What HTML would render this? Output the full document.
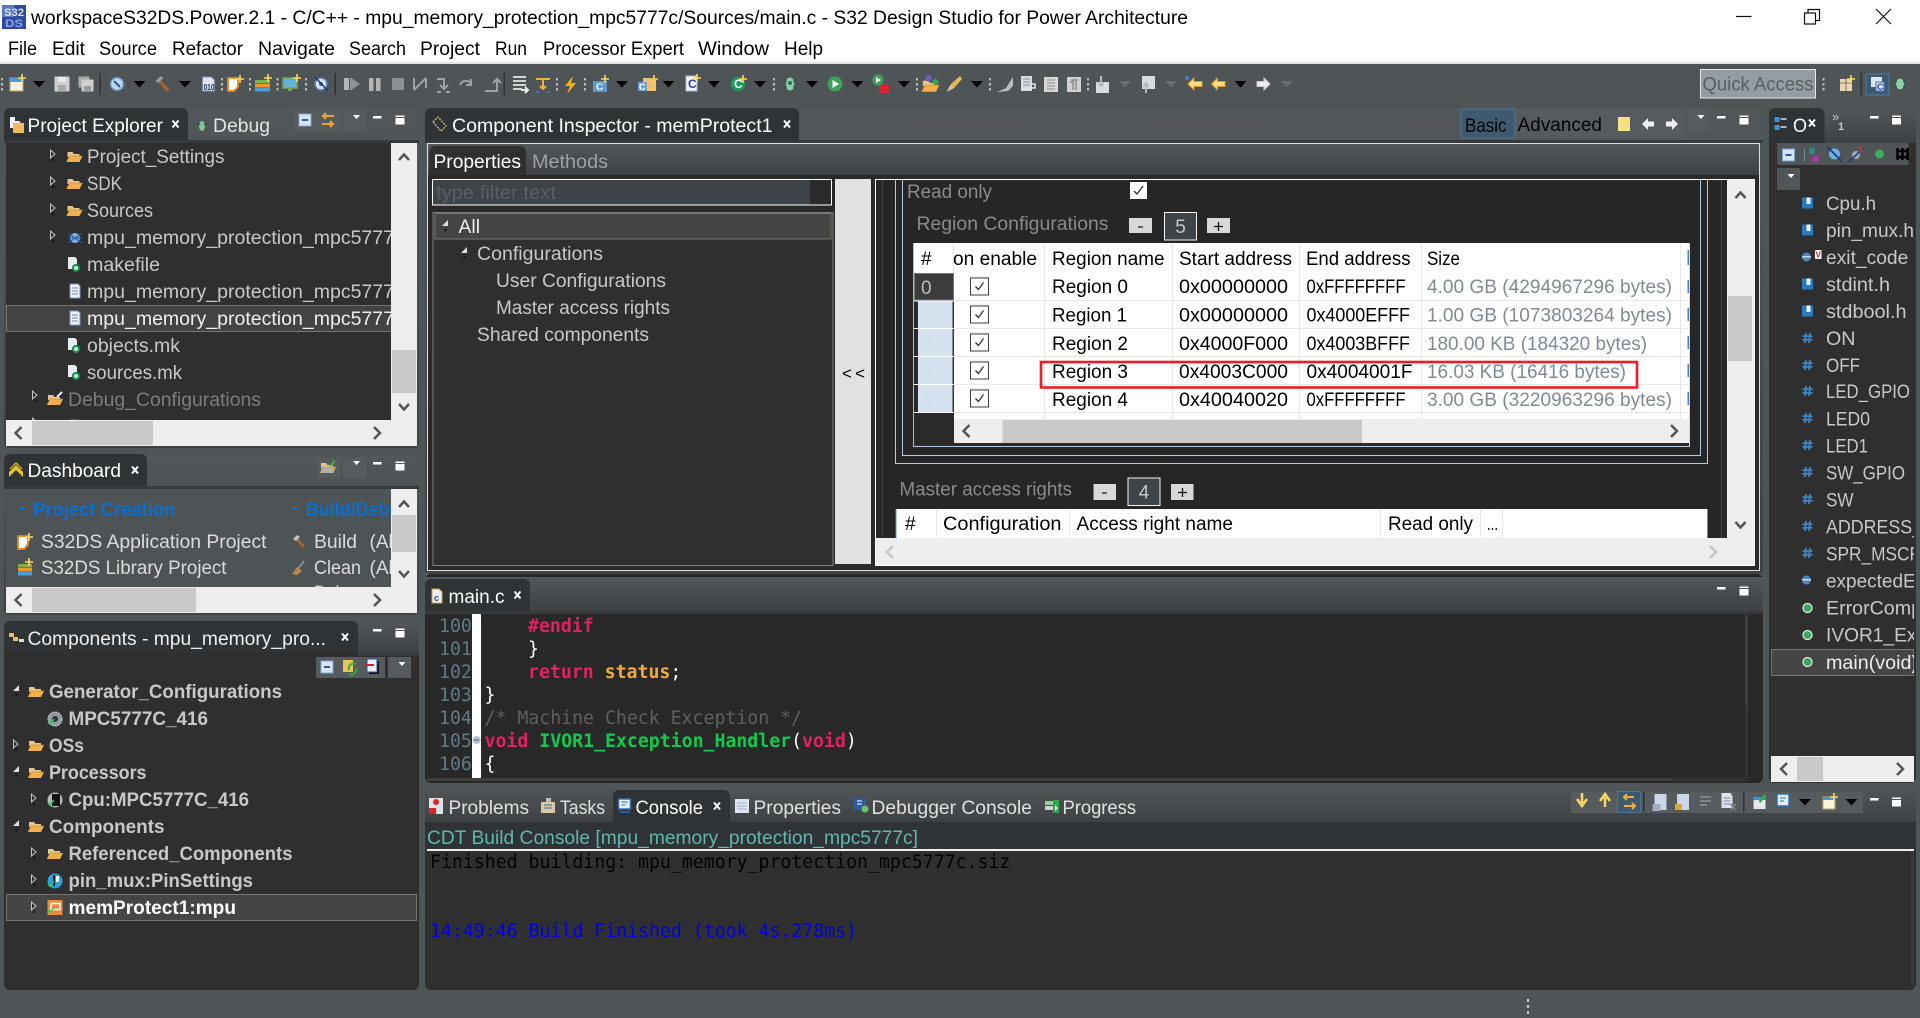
<!DOCTYPE html>
<html lang="en"><head><meta charset="utf-8"><title>S32 Design Studio</title>
<style>
html,body{margin:0;padding:0;background:#4f5457;width:1920px;height:1018px;overflow:hidden}
svg{display:block}
text{font-family:"Liberation Sans","Noto Sans CJK SC",sans-serif;font-size:19px;white-space:pre}
.k{fill:#000}.w{fill:#fff}.l{fill:#c8c8c8}.g{fill:#8a8a8a}.d{fill:#7c7c7c}.s{fill:#7f8b97}
.b{font-weight:bold}
.m{font-family:"DejaVu Sans Mono","Liberation Mono",monospace;font-size:18.2px}
.pk{fill:#e0235f;font-weight:bold}.gr{fill:#12c94c;font-weight:bold}.or{fill:#f2a93b;font-weight:bold}.cm{fill:#5f5f5f}.ln{fill:#5f7a85}
.ic{font-size:9px;font-weight:bold}
</style></head><body>
<svg xmlns="http://www.w3.org/2000/svg" width="1920" height="1018" viewBox="0 0 1920 1018">
<defs>
<linearGradient id="tb" x1="0" y1="0" x2="0" y2="1"><stop offset="0" stop-color="#52575a"/><stop offset="1" stop-color="#3e4143"/></linearGradient>
<clipPath id="c1"><rect x="6" y="143" width="385" height="277"/></clipPath>
<clipPath id="c2"><rect x="6" y="489" width="385" height="98"/></clipPath>
<clipPath id="c3"><rect x="1771" y="190" width="143" height="566"/></clipPath>
<clipPath id="c4"><rect x="427" y="614" width="1318" height="165"/></clipPath>
<path id="dd" d="M-6-3H6L0 3.5z" fill="#000"/>
<path id="ddg" d="M-6-3H6L0 3.5z" fill="#696e71"/>
<path id="wd" d="M-3.5-2H3.500L0 2z" fill="#fff"/>
<g id="gr"><rect x="-1" y="-7" width="2" height="2.500" fill="#bbb"/><rect x="-1" y="-2" width="2" height="2.500" fill="#bbb"/><rect x="-1" y="3" width="2" height="2.500" fill="#bbb"/></g>
<rect id="sp" x="-.5" y="-11" width="1.500" height="22" fill="#2f3234"/>
<g id="fo"><path d="M-7-5h5l1.500 2H5v3H-7z" fill="#e8c489"/><path d="M-8 5L-5-1H8L5 5z" fill="#f2b04d"/><path d="M-8 5L-5-1H8" fill="none" stroke="#b98635" stroke-width=".6"/></g>
<g id="doc"><path d="M-5-7H3L5-5V7H-5z" fill="#eef2fa" stroke="#7e95bd"/><path d="M-3-3H3M-3 0H3M-3 3H3" stroke="#6b87b8"/></g>
<g id="mk"><path d="M-5-7H2L4-5V5H-5z" fill="#e7ecf3"/><circle cx="3" cy="4" r="4" fill="#13924f"/><circle cx="3" cy="4" r="2" fill="#cfe8d6"/></g>
<g id="ex"><path d="M-2.500-5L2 -1L-2.500 3z" fill="#2f2f2f" stroke="#c4c4c4"/><path d="M-1 3L1 5L-1 6" stroke="#111" fill="none"/></g>
<g id="co"><path d="M3-6V0H-3z" fill="#e0e0e0"/><path d="M-1 3L2 3L0 6z" fill="#111"/></g>
<path id="cl" d="M-3-3.500L3 3.500M3-3.500L-3 3.500" stroke="#fff" stroke-width="2"/>
<rect id="mn" x="-4" y="-1" width="8.500" height="2.500" fill="#fff"/>
<g id="mx"><rect x="-4.500" y="-4.500" width="9" height="9" fill="#fff"/><rect x="-4.500" y="-3" width="9" height="1" fill="#555"/></g>
<path id="cU" d="M-5 3L0-2.500L5 3" fill="none" stroke="#555" stroke-width="2.500"/>
<path id="cD" d="M-5-3L0 2.500L5-3" fill="none" stroke="#555" stroke-width="2.500"/>
<path id="cL" d="M3-6L-3 0L3 6" fill="none" stroke="#555" stroke-width="2.500"/>
<path id="cR" d="M-3-6L3 0L-3 6" fill="none" stroke="#555" stroke-width="2.500"/>
<g id="cb"><rect x="-9.500" y="-9.500" width="19" height="19" fill="#f0f0f0"/><rect x="-9" y="-7.500" width="18" height="17" fill="#fff" stroke="#3f3f3f"/><path d="M-4 1L-1 4L4-3" fill="none" stroke="#333" stroke-width="1.300"/></g>
<g id="ha"><path d="M-1.500-5L-2.500 5M2.500-5L1.500 5M-5-1.800H5M-5 1.800H5" stroke="#3d86c6" stroke-width="1.800" fill="none"/></g>
<g id="in"><rect x="-5.500" y="-5.500" width="11" height="11" fill="#2a78bd"/><path d="M-1-5.500V1H3V-5.500" fill="#e8f0f8"/></g>
<g id="bd"><circle r="4.500" fill="#4b86c2"/><rect x="-4.500" y="-1" width="9" height="1.500" fill="#c5d9ee"/></g>
<g id="gd"><circle r="4.500" fill="#3da35e" stroke="#dcefe2" stroke-width="1.300"/></g>
<g id="plus"><path d="M0-4V4M-4 0H4" stroke="#ffd75e" stroke-width="1.600"/></g>
</defs>

<rect width="1920" height="1018" fill="#4f5457"/>
<!-- title / menu -->
<rect width="1920" height="62" fill="#fff"/><rect y="62" width="1920" height="2" fill="#e4e4e4"/>
<rect x="2" y="5" width="24" height="24" fill="#2c4aa0"/>
<path d="M2 5h12v12H2z" fill="#5878c8"/><text x="4" y="16" textLength="20" lengthAdjust="spacingAndGlyphs" style="font-size:11px;font-weight:bold;fill:#dfe6f7">S32</text><text x="5" y="27" textLength="18" lengthAdjust="spacingAndGlyphs" style="font-size:11px;font-weight:bold;fill:#8ea4dd">DS</text>
<text class="k" x="31" y="24" textLength="1157" lengthAdjust="spacingAndGlyphs">workspaceS32DS.Power.2.1 - C/C++ - mpu_memory_protection_mpc5777c/Sources/main.c - S32 Design Studio for Power Architecture</text>
<text class="k" x="8" y="55" textLength="29" lengthAdjust="spacingAndGlyphs">File</text>
<text class="k" x="52" y="55" textLength="33" lengthAdjust="spacingAndGlyphs">Edit</text>
<text class="k" x="99" y="55" textLength="58" lengthAdjust="spacingAndGlyphs">Source</text>
<text class="k" x="172" y="55" textLength="71" lengthAdjust="spacingAndGlyphs">Refactor</text>
<text class="k" x="258" y="55" textLength="77" lengthAdjust="spacingAndGlyphs">Navigate</text>
<text class="k" x="349" y="55" textLength="57" lengthAdjust="spacingAndGlyphs">Search</text>
<text class="k" x="420" y="55" textLength="60" lengthAdjust="spacingAndGlyphs">Project</text>
<text class="k" x="495" y="55" textLength="32" lengthAdjust="spacingAndGlyphs">Run</text>
<text class="k" x="543" y="55" textLength="141" lengthAdjust="spacingAndGlyphs">Processor Expert</text>
<text class="k" x="698" y="55" textLength="71" lengthAdjust="spacingAndGlyphs">Window</text>
<text class="k" x="784" y="55" textLength="39" lengthAdjust="spacingAndGlyphs">Help</text>
<path d="M1736 16.500H1751.500" stroke="#111" stroke-width="1.200"/>
<rect x="1804.500" y="13" width="11" height="11" fill="none" stroke="#111" stroke-width="1.200"/><path d="M1808 13V9.500H1819.500V20.500H1815.500" fill="none" stroke="#111" stroke-width="1.200"/>
<path d="M1876 9L1891 24M1891 9L1876 24" stroke="#111" stroke-width="1.200"/>

<!-- main toolbar icons -->
<use href="#gr" x="2" y="85"/>
<g transform="translate(17,84)"><rect x="-7" y="-6" width="13" height="13" fill="#fbf3d8" stroke="#b9a470"/><rect x="-7" y="-6" width="13" height="4" fill="#4a9ad8"/><use href="#plus" x="5" y="-6"/></g>
<use href="#dd" x="39" y="84"/>
<g transform="translate(62,84)"><rect x="-7.500" y="-7.500" width="15" height="15" rx="1" fill="#cfcfcf"/><rect x="-4" y="-7" width="8" height="5" fill="#e8e8e8"/><rect x="-4" y="1" width="8" height="6" fill="#a9a9a9"/></g>
<g transform="translate(86,84)"><rect x="-7.500" y="-7.500" width="11" height="11" fill="#a8a8a8"/><rect x="-4.500" y="-4.500" width="12" height="12" rx="1" fill="#cfcfcf"/><rect x="-2" y="2" width="7" height="5" fill="#9a9a9a"/></g>
<use href="#sp" x="100" y="84"/>
<g transform="translate(117,84)"><circle r="6.500" fill="#bed7ee" stroke="#5e8cb8" stroke-width="2" stroke-dasharray="2 1.500"/><path d="M-3-3L3 3" stroke="#2b5a8a" stroke-width="2"/></g>
<use href="#dd" x="139.500" y="84"/>
<g transform="translate(162.500,84)"><path d="M-5-5L6 7" stroke="#a0622f" stroke-width="3.500"/><path d="M-7-3L-2-8L1-6L-4-1z" fill="#9a9a9a"/></g>
<use href="#dd" x="185" y="84"/>
<g transform="translate(208.500,84)"><path d="M-6-7H3L6-4V7H-6z" fill="#dde6f2" stroke="#7c90ad"/><text class="ic" x="-5" y="6" textLength="11" lengthAdjust="spacingAndGlyphs" style="fill:#20355f;font-size:8px">010</text></g>
<use href="#gr" x="222" y="85"/>
<g transform="translate(235,84)"><path d="M-7-6H3V3L-1 7H-7z" fill="#fff" stroke="#e58a1f" stroke-width="1.800"/><use href="#plus" x="5" y="-5"/></g>
<use href="#gr" x="250" y="85"/>
<g transform="translate(263,84)"><rect x="-8" y="-4" width="15" height="3.500" fill="#7fb04a"/><rect x="-8" y="0" width="15" height="3.500" fill="#f0962a"/><rect x="-8" y="4" width="15" height="3.500" fill="#4a9fd8"/><use href="#plus" x="5" y="-6"/></g>
<use href="#gr" x="277.500" y="85"/>
<g transform="translate(291,84)"><rect x="-8" y="-6" width="14" height="10" fill="#62b4e0" stroke="#7aa64a" stroke-width="1.500"/><rect x="-3" y="4" width="4" height="3" fill="#7aa64a"/><use href="#plus" x="6" y="-6"/></g>
<use href="#gr" x="306" y="85"/>
<g transform="translate(321,84)"><circle r="6" fill="#d4e4f2" stroke="#5a7fa8" stroke-width="1.500"/><circle r="2" fill="#3b6592"/><path d="M-6-7L7 7" stroke="#123b7a" stroke-width="1.500"/></g>
<use href="#sp" x="335" y="84"/>
<g fill="#b4b4b4"><rect x="344" y="78" width="5" height="12"/><path d="M350 77L360 84L350 91z" fill="#8f9396"/><rect x="369" y="78" width="4.500" height="13"/><rect x="376" y="78" width="4.500" height="13"/><rect x="392" y="78" width="12" height="12" rx="1" fill="#8d9194"/></g>
<g stroke="#a0a0a0" fill="none" stroke-width="2"><path d="M414 90L426 78"/><path d="M414 78V90M426 78V88"/><path d="M437 79H444V88M440 85L444 89L448 85M437 92H441M446 92H450"/><path d="M460 85A6 6 0 0 1 471 84M471 79V85H466"/><path d="M485 91H497V80M493 83L497 79L501 83"/></g>
<use href="#sp" x="504" y="84"/>
<g transform="translate(520,84)" stroke="#d4d4d4" stroke-width="2" fill="none"><path d="M-7-7H6M-7-3H6M-7 1H6M-7 5H2"/><path d="M1 6H7M5 3L8 6L5 9" stroke="#eee"/></g>
<g transform="translate(543,84)" stroke="#f2ae3e" stroke-width="2" fill="none"><path d="M-7-5H7M0-5V5M-3 2L0 5L3 2"/><path d="M-7 8H-3M3 8H7" stroke="#3a6fa8"/></g>
<use href="#gr" x="557" y="85"/>
<path d="M573 76L565 86H570L567 94L576 83H571z" fill="#f5b400"/>
<use href="#gr" x="585" y="85"/>
<g transform="translate(600,84)"><path d="M-7-3H7V8H-7z" fill="#5a9ad2"/><text class="ic" x="-4" y="6" style="fill:#fff;font-size:10px">C</text><use href="#plus" x="5" y="-5"/></g>
<use href="#dd" x="622" y="84"/>
<g transform="translate(646,84)"><path d="M-3-6H4L6-4H10V7H-3z" fill="#f0c36b"/><rect x="-8" y="-2" width="9" height="9" fill="#6f9fd6"/><text class="ic" x="-7" y="6" style="fill:#fff">C</text><use href="#plus" x="8" y="-5"/></g>
<use href="#dd" x="668.500" y="84"/>
<g transform="translate(692,84)"><path d="M-6-8H5V7H-6z" fill="#f2f5fb" stroke="#b0b8c8"/><text class="ic" x="-4" y="4" style="fill:#1f3fb5;font-size:12px">C</text><use href="#plus" x="5" y="-6"/></g>
<use href="#dd" x="714" y="84"/>
<g transform="translate(738,84)"><circle r="7" fill="#1d9c5e"/><text class="ic" x="-4" y="4" style="fill:#fff;font-size:12px">C</text><use href="#plus" x="5" y="-5"/></g>
<use href="#dd" x="760" y="84"/>
<use href="#gr" x="774" y="85"/>
<g transform="translate(790,84)"><ellipse rx="4.500" ry="6.500" fill="#8fcfa5"/><path d="M-7-5L-3-2M7-5L3-2M-7 5L-3 2M7 5L3 2M-8 0H-4M8 0H4" stroke="#2e4f48"/><circle cy="-1" r="2" fill="#2d6e5a"/></g>
<use href="#dd" x="812" y="84"/>
<g transform="translate(835,84)"><circle r="7.500" fill="#3aa457"/><path d="M-2.500-4L4 0L-2.500 4z" fill="#fff"/></g>
<use href="#dd" x="857.500" y="84"/>
<g transform="translate(881,84)"><circle cx="-3" cy="-4" r="5.500" fill="#3aa457"/><path d="M-5-7L0-4L-5-1z" fill="#fff"/><rect x="-2" y="2" width="11" height="7" fill="#d8262c"/><rect x="1" y="0" width="5" height="3" fill="none" stroke="#d8262c"/></g>
<use href="#dd" x="904" y="84"/>
<use href="#gr" x="917" y="85"/>
<g transform="translate(930.500,84)"><use href="#fo" y="2" transform="scale(1.100)"/><circle cx="-2" cy="-6" r="3.500" fill="#6c5bb8"/><circle cx="5" cy="-2" r="3" fill="#3aa457"/></g>
<g transform="translate(954,84)"><path d="M-7 7L-3 0L6-8L8-5L0 4z" fill="#e9b64c"/><path d="M-7 8L-4 1L0 4z" fill="#cfc4a5"/></g>
<use href="#dd" x="977" y="84"/>
<use href="#gr" x="990" y="85"/>
<path d="M997 92L1006 88L1013 77V86L1008 91L997 92z" fill="#bdbdbd"/>
<g transform="translate(1028,84)"><path d="M-7-8H4V7H-7z" fill="#d8dde4"/><path d="M-5-5H2M-5-2H2M-5 1H2" stroke="#808a95"/><path d="M3 0H7V4H0" fill="none" stroke="#e7e7e7" stroke-width="1.500"/></g>
<g transform="translate(1051,84)"><rect x="-7" y="-7" width="14" height="15" fill="#d8d8d8"/><path d="M-4-4H4M-4-1H4M-4 2H4M-4 5H4" stroke="#8c8c8c"/></g>
<g transform="translate(1074,84)"><rect x="-7" y="-7" width="14" height="15" fill="#d0d0d0"/><path d="M-3-4H4M-1-4V6M2-4V6M-4-2H0" stroke="#8c8c8c" stroke-width="1.500" fill="none"/></g>
<use href="#gr" x="1088" y="85"/>
<g transform="translate(1102,84)"><path d="M-6-2H7V9H-6z" fill="#d8dbe0"/><path d="M-1-8V2M-4-1L-1 2L2-1" stroke="#bbb" stroke-width="2" fill="none"/></g>
<use href="#ddg" x="1125" y="84"/>
<g transform="translate(1148,84)"><path d="M-6-8H7V5H-6z" fill="#d8dbe0"/><path d="M-2 9V0M-5 3L-2-1L1 3" stroke="#bbb" stroke-width="2" fill="none"/></g>
<use href="#ddg" x="1171" y="84"/>
<g transform="translate(1194,84)"><path d="M-6 0L0-6V-2.500H8V2.500H0V6z" fill="#ffe08a" stroke="#d89b2b"/><circle cx="-7" cy="-6" r="2" fill="#3f7fd0"/></g>
<path d="M1211.500 84L1217.500 78V81.500H1225V86.500H1217.500V90z" fill="#ffdc80" stroke="#d89b2b"/>
<use href="#dd" x="1240.500" y="84"/>
<path d="M1270 84L1264 78V81.500H1257V86.500H1264V90z" fill="#eee" stroke="#c8c8c8"/>
<use href="#ddg" x="1286.500" y="84"/>
<rect x="1700.500" y="69.500" width="115" height="28.500" fill="#969ca3" stroke="#e6e6e6"/>
<text x="1702.500" y="90.500" textLength="111" lengthAdjust="spacingAndGlyphs" style="fill:#5a5f64">Quick Access</text>
<use href="#gr" x="1823.500" y="85"/>
<g transform="translate(1846,84)"><rect x="-6" y="-5" width="12" height="12" fill="#e9d8a9"/><path d="M-6-1H6M0-5V7" stroke="#777"/><use href="#plus" x="5" y="-5"/></g>
<use href="#sp" x="1861" y="84"/>
<rect x="1866" y="74" width="23" height="21" fill="#3d5a70" stroke="#4d7aa0"/><g transform="translate(1877,84)"><rect x="-6" y="-7" width="11" height="10" fill="#dfe6ef"/><rect x="-1" y="-2" width="8" height="9" fill="#dfe6ef" stroke="#3e6ea5"/><text class="ic" x="0" y="6" style="fill:#1f3fb5">C</text></g>
<g transform="translate(1900,84)"><ellipse rx="4" ry="5.500" fill="#8fcfa5"/><path d="M-6-4L-3-2M6-4L3-2M-6 4L-3 2M6 4L3 2" stroke="#2e4f48"/></g>

<!-- Project Explorer -->
<rect x="4" y="108" width="415" height="340" rx="6" fill="url(#tb)"/>
<path d="M4 140V114A6 6 0 0 1 10 108H182A6 6 0 0 1 188 114V140z" fill="#2f3336"/>
<rect x="4" y="140" width="415" height="3" fill="#363a3c"/>
<rect x="6" y="143" width="385" height="277" fill="#2f2f2f"/>
<g transform="translate(16,125)"><path d="M-6-8H-1V-4H3L6-1V3H-6z" fill="#f4f4f4"/><rect x="-3" y="-2" width="11" height="10" fill="#f0ba5c"/></g>
<text class="w" x="27.500" y="132" textLength="135.500" lengthAdjust="spacingAndGlyphs">Project Explorer</text><use href="#cl" x="175.500" y="124"/>
<g transform="translate(202,126)"><ellipse rx="3" ry="5" fill="#7fc79a"/><path d="M-5-3L-2-1M5-3L2-1" stroke="#203d36"/></g>
<text class="w" x="213" y="132" textLength="57" lengthAdjust="spacingAndGlyphs" style="fill:#e4e4e4">Debug</text>
<rect x="294" y="111" width="46" height="20" fill="#565b5e"/><rect x="343" y="111" width="23" height="20" fill="#565b5e"/>
<g transform="translate(305,120)"><rect x="-6" y="-6" width="12" height="12" fill="#d9e4f1" stroke="#7ea6d2"/><rect x="-3" y="-1" width="6" height="2" fill="#2b5d9d"/></g>
<g transform="translate(328,120)" stroke="#e8a52f" stroke-width="2" fill="none"><path d="M6-4H-5M-2-7L-5-4L-2-1M-6 4H5M2 1L5 4L2 7"/></g>
<use href="#wd" x="356.500" y="117"/><use href="#mn" x="377" y="117"/><use href="#mx" x="400" y="120"/>
<g clip-path="url(#c1)">
<use href="#ex" x="53" y="155"/><use href="#fo" x="74.500" y="157"/><text class="l" x="87" y="163" textLength="137.500" lengthAdjust="spacingAndGlyphs">Project_Settings</text>
<use href="#ex" x="53" y="182"/><use href="#fo" x="74.500" y="184"/><text class="l" x="87" y="190" textLength="35" lengthAdjust="spacingAndGlyphs">SDK</text>
<use href="#ex" x="53" y="209"/><use href="#fo" x="74.500" y="211"/><text class="l" x="87" y="217" textLength="66" lengthAdjust="spacingAndGlyphs">Sources</text>
<use href="#ex" x="53" y="236"/><g transform="translate(75,238)"><circle r="5" fill="#7cb2e8"/><path d="M-7-5L7 5M7-5L-7 5M-7 0H7" stroke="#2c5c9c"/></g><text class="l" x="87" y="244" textLength="307" lengthAdjust="spacingAndGlyphs">mpu_memory_protection_mpc5777</text>
<use href="#mk" x="73" y="264"/><text class="l" x="87" y="271" textLength="73" lengthAdjust="spacingAndGlyphs">makefile</text>
<use href="#doc" x="75" y="291"/><text class="l" x="87" y="298" textLength="307" lengthAdjust="spacingAndGlyphs">mpu_memory_protection_mpc5777</text>
<rect x="6.500" y="305.500" width="385" height="26" fill="#434343" stroke="#76766a"/>
<use href="#doc" x="75" y="318"/><text class="w" x="87" y="325" textLength="307" lengthAdjust="spacingAndGlyphs" style="fill:#eee">mpu_memory_protection_mpc5777</text>
<use href="#mk" x="73" y="345"/><text class="l" x="87" y="352" textLength="93" lengthAdjust="spacingAndGlyphs">objects.mk</text>
<use href="#mk" x="73" y="372"/><text class="l" x="87" y="379" textLength="95" lengthAdjust="spacingAndGlyphs">sources.mk</text>
<use href="#ex" x="35" y="396"/><g transform="translate(55,400)"><use href="#fo"/><path d="M2-3L7-8" stroke="#f5f5f5" stroke-width="2"/></g><text class="d" x="68" y="406" textLength="193" lengthAdjust="spacingAndGlyphs">Debug_Configurations</text>
<use href="#ex" x="35" y="423"/><use href="#fo" x="55" y="427"/><text class="d" x="68" y="433" textLength="120" lengthAdjust="spacingAndGlyphs">Documents</text>
</g>
<rect x="391" y="143" width="26" height="303" fill="#eee"/><rect x="392" y="350" width="24" height="43" fill="#c9c9c9"/>
<use href="#cU" x="404" y="157"/><use href="#cD" x="404" y="407"/>
<rect x="6" y="420" width="411" height="26" fill="#eee"/><rect x="32" y="421" width="121" height="24" fill="#c9c9c9"/>
<use href="#cL" x="18.500" y="433"/><use href="#cR" x="377" y="433"/>

<!-- Dashboard -->
<rect x="4" y="454" width="415" height="161" rx="6" fill="url(#tb)"/>
<path d="M4 486V460A6 6 0 0 1 10 454H141A6 6 0 0 1 147 460V486z" fill="#2f3336"/>
<rect x="4" y="486" width="415" height="3" fill="#363a3c"/>
<path d="M9 472L16 465L23 472V477L16 470L9 477z" fill="#e6c229"/><path d="M10 469L16 463L22 469" fill="none" stroke="#c9a922" stroke-width="1.500"/>
<text class="w" x="27.500" y="477" textLength="93.500" lengthAdjust="spacingAndGlyphs">Dashboard</text><use href="#cl" x="135" y="470"/>
<rect x="317" y="458" width="23" height="20" fill="#565b5e"/><rect x="343" y="458" width="23" height="20" fill="#565b5e"/>
<g transform="translate(328,468)"><use href="#fo"/><rect x="-7" y="-1" width="13" height="6" fill="#7fb2e8" opacity=".55"/><path d="M2-2L7-7" stroke="#3fb24c" stroke-width="2"/></g>
<use href="#wd" x="356.500" y="463"/><use href="#mn" x="377" y="463"/><use href="#mx" x="400" y="466"/>
<rect x="6" y="489" width="385" height="98" fill="#4e5356"/>
<g clip-path="url(#c2)">
<path d="M18 507H26L22 511z" fill="#0a6fd0"/><path d="M291 507H299L295 511z" fill="#0a6fd0"/>
<text class="b" x="33" y="516" textLength="142.500" lengthAdjust="spacingAndGlyphs" style="fill:#0a6fd0">Project Creation</text>
<text class="b" x="306" y="516" textLength="105" lengthAdjust="spacingAndGlyphs" style="fill:#0a6fd0">Build/Debug</text>
<g transform="translate(25,542)"><path d="M-7-6H3V3L-1 7H-7z" fill="#fff" stroke="#e58a1f" stroke-width="1.800"/><use href="#plus" x="4" y="-5"/></g>
<text class="l" x="41" y="548" textLength="225.500" lengthAdjust="spacingAndGlyphs" style="fill:#dcdcdc">S32DS Application Project</text>
<g transform="translate(25,568)"><rect x="-7" y="-4" width="14" height="3.500" fill="#7fb04a"/><rect x="-7" y="0" width="14" height="3.500" fill="#f0962a"/><rect x="-7" y="4" width="14" height="3.500" fill="#4a9fd8"/><use href="#plus" x="4" y="-6"/></g>
<text class="l" x="41" y="574" textLength="185.500" lengthAdjust="spacingAndGlyphs" style="fill:#dcdcdc">S32DS Library Project</text>
<g transform="translate(299,541)"><path d="M-3-3L5 6" stroke="#a0622f" stroke-width="3"/><path d="M-6-2L-2-6L1-4L-3 0z" fill="#c0c0c0"/></g>
<text class="l" x="314" y="548" textLength="43" lengthAdjust="spacingAndGlyphs" style="fill:#dcdcdc">Build</text><text class="l" x="369.500" y="548" style="fill:#dcdcdc">(All)</text>
<g transform="translate(299,568)"><path d="M5-7L-1 1" stroke="#8a8a8a" stroke-width="2"/><path d="M-7 6L-2-1L3 3L-2 7z" fill="#b8854b"/></g>
<text class="l" x="314" y="574" textLength="47" lengthAdjust="spacingAndGlyphs" style="fill:#dcdcdc">Clean</text><text class="l" x="369.500" y="574" style="fill:#dcdcdc">(All)</text>
<text class="l" x="314" y="599" textLength="50" lengthAdjust="spacingAndGlyphs">Debug</text>
</g>
<rect x="391" y="489" width="26" height="98" fill="#eee"/><rect x="392" y="515" width="24" height="37" fill="#c9c9c9"/>
<use href="#cU" x="404" y="504"/><use href="#cD" x="404" y="574"/>
<rect x="6" y="587" width="411" height="26" fill="#eee"/><rect x="32" y="588" width="164" height="24" fill="#c9c9c9"/>
<use href="#cL" x="18.500" y="600"/><use href="#cR" x="377" y="600"/>

<!-- Components -->
<rect x="4" y="621" width="415" height="369" rx="6" fill="#2f2f2f"/>
<path d="M4 653V627A6 6 0 0 1 10 621H419V653z" fill="url(#tb)"/>
<path d="M4 653V627A6 6 0 0 1 10 621H352A6 6 0 0 1 358 627V653z" fill="#2f3336"/>
<rect x="358" y="653" width="61" height="3" fill="#363a3c"/>
<g transform="translate(16,638)"><rect x="-7" y="-5" width="5" height="4" fill="#f0ba5c"/><rect x="-3" y="-1" width="5" height="4" fill="#f0ba5c"/><rect x="3" y="1" width="5" height="3" fill="#ddd"/></g>
<text class="w" x="27.500" y="645" textLength="298.500" lengthAdjust="spacingAndGlyphs" style="fill:#eee">Components - mpu_memory_pro...</text><use href="#cl" x="345" y="637"/>
<use href="#mn" x="377" y="630"/><use href="#mx" x="400" y="633"/>
<rect x="316" y="657" width="69" height="21" fill="#565b5e"/><rect x="388" y="657" width="23" height="21" fill="#565b5e"/>
<g transform="translate(327,667)"><rect x="-6" y="-6" width="12" height="12" fill="#d9e4f1" stroke="#7ea6d2"/><rect x="-3" y="-1" width="6" height="2" fill="#2b5d9d"/></g>
<g transform="translate(350,667)"><rect x="-7" y="-7" width="10" height="12" fill="#e9c55a"/><path d="M-1 3A5 5 0 0 1 6-3M6 1A5 5 0 0 1-1 7" stroke="#2fae42" stroke-width="2" fill="none"/></g>
<g transform="translate(373,667)"><rect x="-4" y="-6" width="10" height="13" fill="#111"/><rect x="-6" y="-8" width="10" height="13" fill="#e8eefa" stroke="#3950a8"/><path d="M-7-2H1" stroke="#c81e2f" stroke-width="2"/></g>
<use href="#wd" x="402" y="664"/>
<use href="#co" x="16" y="691"/><use href="#fo" x="36" y="692"/><text class="l b" x="49" y="698" textLength="233" lengthAdjust="spacingAndGlyphs">Generator_Configurations</text>
<g transform="translate(55,719)"><circle r="7" fill="#8f9aa3" stroke="#cfd4d8" stroke-width="1" stroke-dasharray="2 1"/><circle r="3" fill="#333"/><path d="M-7 3L-5 5L-1 0" stroke="#33c85a" stroke-width="1.600" fill="none"/></g><text class="l b" x="68.500" y="725" textLength="139.500" lengthAdjust="spacingAndGlyphs">MPC5777C_416</text>
<use href="#ex" x="16" y="745"/><use href="#fo" x="36" y="746"/><text class="l b" x="49" y="752" textLength="35" lengthAdjust="spacingAndGlyphs">OSs</text>
<use href="#co" x="16" y="772"/><use href="#fo" x="36" y="773"/><text class="l b" x="49" y="779" textLength="97.500" lengthAdjust="spacingAndGlyphs">Processors</text>
<use href="#ex" x="34" y="799"/><g transform="translate(55,800)"><circle r="7.500" fill="#bbb"/><rect x="-3" y="-6" width="8" height="12" fill="#111"/><path d="M-7 3L-5 5L-1 0" stroke="#33c85a" stroke-width="1.600" fill="none"/></g><text class="l b" x="68.500" y="806" textLength="180.500" lengthAdjust="spacingAndGlyphs">Cpu:MPC5777C_416</text>
<use href="#co" x="16" y="826"/><use href="#fo" x="36" y="827"/><text class="l b" x="49" y="833" textLength="115.500" lengthAdjust="spacingAndGlyphs">Components</text>
<use href="#ex" x="34" y="853"/><use href="#fo" x="55" y="854"/><text class="l b" x="68.500" y="860" textLength="224" lengthAdjust="spacingAndGlyphs">Referenced_Components</text>
<use href="#ex" x="34" y="880"/><g transform="translate(55,881)"><circle r="7.500" fill="#27a3e0"/><rect x="-2" y="-6" width="2" height="11" fill="#111"/><rect x="1" y="-5" width="3" height="6" fill="#fff"/><path d="M-7 3L-5 5L-1 0" stroke="#33c85a" stroke-width="1.600" fill="none"/></g><text class="l b" x="68.500" y="887" textLength="184.500" lengthAdjust="spacingAndGlyphs">pin_mux:PinSettings</text>
<rect x="6.500" y="894.500" width="410" height="26" fill="#454545" stroke="#77766a"/>
<use href="#ex" x="34" y="907"/><g transform="translate(55,907.500)"><rect x="-7.500" y="-7.500" width="15" height="15" fill="#ee8a3a"/><rect x="-4" y="-4" width="9" height="6" fill="none" stroke="#fff" stroke-width="1.500"/><path d="M-7 3L-5 5L-1 0" stroke="#33c85a" stroke-width="1.600" fill="none"/></g><text class="w b" x="68.500" y="914" textLength="167.500" lengthAdjust="spacingAndGlyphs">memProtect1:mpu</text>

<!-- Component Inspector -->
<rect x="425" y="108" width="1338" height="466" rx="6" fill="url(#tb)"/>
<path d="M425 140V114A6 6 0 0 1 431 108H793A6 6 0 0 1 799 114V140z" fill="#2f3336"/>
<rect x="425" y="140" width="1338" height="3" fill="#363a3c"/>
<g transform="translate(439,124)"><path d="M-6-2L-1-7L7 2L2 7z" fill="none" stroke="#cfc23c" stroke-width="1.300" stroke-dasharray="2 1"/></g>
<text class="w" x="452" y="132" textLength="320.500" lengthAdjust="spacingAndGlyphs">Component Inspector - memProtect1</text><use href="#cl" x="787" y="124"/>
<rect x="1461" y="109" width="223" height="29" fill="#565b5e"/>
<rect x="1461" y="109" width="54" height="29" fill="#3f5a6e" stroke="#4a7595"/>
<text class="k" x="1465" y="132" textLength="41.500" lengthAdjust="spacingAndGlyphs">Basic</text>
<text class="k" x="1517.500" y="131" textLength="84.500" lengthAdjust="spacingAndGlyphs">Advanced</text>
<g transform="translate(1624,124)"><path d="M-6-7H6V7H-6z" fill="#f5e08a"/><use href="#plus" x="3" y="-3" transform="scale(.8)"/></g>
<path d="M1642 124L1648 118V121.500H1654V126.500H1648V130z" fill="#eee"/>
<path d="M1678 124L1672 118V121.500H1666V126.500H1672V130z" fill="#eee"/>
<rect x="1687" y="109" width="22" height="22" fill="#565b5e"/><use href="#wd" x="1701" y="117"/>
<use href="#mn" x="1721" y="117"/><use href="#mx" x="1744" y="120"/>
<!-- frame -->
<rect x="427.500" y="143.500" width="1332" height="427" fill="#2a2a2a" stroke="#dedede"/>
<path d="M428 176V144H1759V176z" fill="url(#tb)"/>
<path d="M429.500 175V152A6 6 0 0 1 435 146H520A6 6 0 0 1 526 152V175z" fill="#2f2f2f"/>
<rect x="428" y="175" width="1331" height="4" fill="#2a2a2a"/>
<text class="w" x="433.500" y="168" textLength="87.500" lengthAdjust="spacingAndGlyphs">Properties</text>
<text class="g" x="532" y="168" textLength="76" lengthAdjust="spacingAndGlyphs" style="fill:#a0a0a0">Methods</text>
<!-- filter -->
<rect x="432.500" y="179.500" width="399" height="25.500" fill="#2b2b2b" stroke="#fff"/>
<rect x="433" y="180" width="377" height="24.500" fill="#3e4348"/>
<text x="436" y="199" textLength="120" lengthAdjust="spacingAndGlyphs" style="fill:#5a5f64">type filter text</text>
<!-- tree -->
<rect x="433" y="212.500" width="400" height="353" fill="#2f2f2f" stroke="#7f7f7f"/>
<rect x="435" y="213.500" width="396" height="25.500" fill="#454545" stroke="#77766a"/>
<use href="#co" x="445" y="226"/><text class="w" x="458.500" y="233" textLength="21.500" lengthAdjust="spacingAndGlyphs" style="fill:#eee">All</text>
<use href="#co" x="464" y="253"/><text class="l" x="477" y="260" textLength="126" lengthAdjust="spacingAndGlyphs">Configurations</text>
<text class="l" x="496" y="287" textLength="170" lengthAdjust="spacingAndGlyphs">User Configurations</text>
<text class="l" x="496" y="314" textLength="174" lengthAdjust="spacingAndGlyphs">Master access rights</text>
<text class="l" x="477" y="341" textLength="172" lengthAdjust="spacingAndGlyphs">Shared components</text>
<!-- splitter -->
<rect x="835" y="179" width="36" height="385" fill="#e1e1e1"/>
<text class="k" x="842" y="379" textLength="23" lengthAdjust="spacing" style="font-size:17px">&lt;&lt;</text>
<!-- right composite -->
<rect x="875.500" y="179.500" width="879" height="386" fill="#262626" stroke="#fff"/>
<g fill="none" stroke-width="1">
<path d="M882.500 180V538M1721.500 180V538" stroke="#444"/>
<path d="M895.500 180V463.500H1707.500V180" stroke="#b4cbe0"/>
<path d="M902.500 180V455.500H1700.500V180" stroke="#b4cbe0"/>
</g>
<rect x="876" y="538" width="878" height="27" fill="#eee"/>
<path d="M893 546L887 552L893 558" fill="none" stroke="#c4c4c4" stroke-width="2.500"/><path d="M1710 546L1716 552L1710 558" fill="none" stroke="#c4c4c4" stroke-width="2.500"/>
<rect x="1727" y="180" width="27" height="358" fill="#eee"/><rect x="1728" y="296" width="24" height="65" fill="#c9c9c9"/>
<use href="#cU" x="1740.500" y="195"/><use href="#cD" x="1740.500" y="525"/>
<text class="g" x="907" y="198" textLength="85" lengthAdjust="spacingAndGlyphs">Read only</text>
<rect x="1130" y="182" width="17" height="17" fill="#fff"/><path d="M1134 191L1137 194L1143 186" fill="none" stroke="#333" stroke-width="1.300"/>
<text class="g" x="916.500" y="230" textLength="192" lengthAdjust="spacingAndGlyphs">Region Configurations</text>
<rect x="1129" y="218" width="23" height="15" fill="#d8d8d8"/><path d="M1138 227H1143" stroke="#222" stroke-width="1.300"/>
<rect x="1164.500" y="212.500" width="32" height="27.500" fill="#3e4348" stroke="#f4f4f4"/><text x="1180.500" y="233" text-anchor="middle" style="fill:#c8c8c8">5</text>
<rect x="1207" y="218" width="23" height="15" fill="#d8d8d8"/><path d="M1218.500 222V231M1214 226.500H1223" stroke="#111" stroke-width="1.300"/>
<!-- table 1 -->
<rect x="913" y="243" width="776" height="204" fill="#2a2a2a"/>
<rect x="914" y="243" width="775" height="30" fill="#fff"/>
<rect x="954" y="273" width="735" height="146" fill="#fff"/>
<rect x="913" y="243" width="1" height="203" fill="#9fc0dd"/>
<rect x="914.500" y="273.500" width="39" height="26.500" fill="#3c3c3c" stroke="#777"/>
<text class="l" x="921" y="294" style="fill:#bdbdbd">0</text>
<g fill="#d5e3f0"><rect x="918" y="301" width="34.500" height="27"/><rect x="918" y="329" width="34.500" height="27"/><rect x="918" y="357" width="34.500" height="27"/><rect x="918" y="385" width="34.500" height="27"/></g>
<rect x="952.500" y="301" width="1.500" height="111" fill="#333"/>
<g fill="#fff"><rect x="914" y="300.500" width="40" height="1"/><rect x="914" y="328" width="40" height="1"/><rect x="914" y="356" width="40" height="1"/><rect x="914" y="384" width="40" height="1"/><rect x="914" y="412" width="40" height="1"/></g>
<text x="921" y="322" style="fill:#d3dde8">1</text><text x="921" y="350" style="fill:#d3dde8">2</text><text x="921" y="378" style="fill:#d3dde8">3</text><text x="921" y="406" style="fill:#d3dde8">4</text>
<g stroke="#e9e9e9" stroke-width="1"><path d="M954 300.500H1689M954 328.500H1689M954 356.500H1689M954 384.500H1689M954 412.500H1689"/><path d="M953.500 243V273M1044.500 243V419M1172.500 243V419M1299.500 243V419M1421.500 243V419M1680.500 243V419"/></g>
<text class="k" x="921" y="265">#</text>
<text class="k" x="953" y="265" textLength="84" lengthAdjust="spacingAndGlyphs">on enable</text>
<text class="k" x="1052" y="265" textLength="112.500" lengthAdjust="spacingAndGlyphs">Region name</text>
<text class="k" x="1179" y="265" textLength="113" lengthAdjust="spacingAndGlyphs">Start address</text>
<text class="k" x="1306" y="265" textLength="104.500" lengthAdjust="spacingAndGlyphs">End address</text>
<text class="k" x="1427" y="265" textLength="33" lengthAdjust="spacingAndGlyphs">Size</text>
<use href="#cb" x="979.500" y="285.500"/><use href="#cb" x="979.500" y="313.500"/><use href="#cb" x="979.500" y="341.500"/><use href="#cb" x="979.500" y="369.500"/><use href="#cb" x="979.500" y="397.500"/>
<text class="k" x="1052" y="293" textLength="76" lengthAdjust="spacingAndGlyphs">Region 0</text>
<text class="k" x="1179" y="293" textLength="109" lengthAdjust="spacingAndGlyphs">0x00000000</text>
<text class="k" x="1306.500" y="293" textLength="99" lengthAdjust="spacingAndGlyphs">0xFFFFFFFF</text>
<text class="s" x="1427" y="293" textLength="245" lengthAdjust="spacingAndGlyphs">4.00 GB (4294967296 bytes)</text>
<text class="k" x="1052" y="321.500" textLength="75" lengthAdjust="spacingAndGlyphs">Region 1</text>
<text class="k" x="1179" y="321.500" textLength="109" lengthAdjust="spacingAndGlyphs">0x00000000</text>
<text class="k" x="1306.500" y="321.500" textLength="103.500" lengthAdjust="spacingAndGlyphs">0x4000EFFF</text>
<text class="s" x="1427" y="321.500" textLength="245" lengthAdjust="spacingAndGlyphs">1.00 GB (1073803264 bytes)</text>
<text class="k" x="1052" y="350" textLength="76" lengthAdjust="spacingAndGlyphs">Region 2</text>
<text class="k" x="1179" y="350" textLength="109" lengthAdjust="spacingAndGlyphs">0x4000F000</text>
<text class="k" x="1306.500" y="350" textLength="103.500" lengthAdjust="spacingAndGlyphs">0x4003BFFF</text>
<text class="s" x="1427" y="350" textLength="220" lengthAdjust="spacingAndGlyphs">180.00 KB (184320 bytes)</text>
<text class="k" x="1052" y="378" textLength="76" lengthAdjust="spacingAndGlyphs">Region 3</text>
<text class="k" x="1179" y="378" textLength="109" lengthAdjust="spacingAndGlyphs">0x4003C000</text>
<text class="k" x="1306.500" y="378" textLength="106" lengthAdjust="spacingAndGlyphs">0x4004001F</text>
<text class="s" x="1427" y="378" textLength="199" lengthAdjust="spacingAndGlyphs">16.03 KB (16416 bytes)</text>
<text class="k" x="1052" y="406" textLength="76" lengthAdjust="spacingAndGlyphs">Region 4</text>
<text class="k" x="1179" y="406" textLength="109" lengthAdjust="spacingAndGlyphs">0x40040020</text>
<text class="k" x="1306.500" y="406" textLength="99" lengthAdjust="spacingAndGlyphs">0xFFFFFFFF</text>
<text class="s" x="1427" y="406" textLength="245" lengthAdjust="spacingAndGlyphs">3.00 GB (3220963296 bytes)</text>
<g fill="#4a86b8"><rect x="1687.500" y="250" width="1.500" height="15"/><rect x="1687.500" y="280" width="1.500" height="13"/><rect x="1687.500" y="308" width="1.500" height="13"/><rect x="1687.500" y="336" width="1.500" height="13"/><rect x="1687.500" y="364" width="1.500" height="13"/><rect x="1687.500" y="392" width="1.500" height="13"/></g>
<rect x="1689" y="243" width="1" height="204" fill="#c8dcec"/>
<rect x="954" y="419" width="735" height="24" fill="#eee"/><rect x="1002.500" y="420" width="359.500" height="23" fill="#c9c9c9"/>
<use href="#cL" x="966.500" y="431"/><use href="#cR" x="1674" y="431"/>
<path d="M913 446.500H1690" stroke="#b4cbe0"/>
<rect x="1041" y="362" width="596" height="25.500" fill="none" stroke="#ee1c25" stroke-width="2.600"/>
<!-- master -->
<text class="g" x="899.500" y="495.500" textLength="172.500" lengthAdjust="spacingAndGlyphs">Master access rights</text>
<rect x="1093.500" y="484" width="22.500" height="16" fill="#d8d8d8"/><path d="M1102 493H1107" stroke="#222" stroke-width="1.300"/>
<rect x="1128" y="478" width="32" height="27.500" fill="#3e4348" stroke="#f4f4f4"/><text x="1144" y="498.500" text-anchor="middle" style="fill:#c8c8c8">4</text>
<rect x="1171" y="484" width="22.500" height="16" fill="#d8d8d8"/><path d="M1182.500 488V497M1178 492.500H1187" stroke="#111" stroke-width="1.300"/>
<rect x="896" y="509" width="811" height="29" fill="#fff"/>
<g stroke="#e9e9e9"><path d="M936.500 509V538M1069.500 509V538M1380.500 509V538M1480.500 509V538M1502.500 509V538"/></g>
<rect x="895.500" y="509" width="1" height="29" fill="#6b8cab"/><rect x="1707" y="509" width="1" height="29" fill="#6b8cab"/>
<text class="k" x="905" y="530">#</text>
<text class="k" x="943" y="530" textLength="118.500" lengthAdjust="spacingAndGlyphs">Configuration</text>
<text class="k" x="1076.500" y="530" textLength="156.500" lengthAdjust="spacingAndGlyphs">Access right name</text>
<text class="k" x="1388" y="530" textLength="85" lengthAdjust="spacingAndGlyphs">Read only</text>
<text class="k" x="1487" y="530" textLength="11" lengthAdjust="spacingAndGlyphs">...</text>

<!-- Editor -->
<rect x="425" y="574" width="1338" height="209" rx="6" fill="#282828"/>
<path d="M425 611V577H1763V611z" fill="url(#tb)"/>
<path d="M425 611V585A6 6 0 0 1 431 579H524A6 6 0 0 1 530 585V611z" fill="#2f3336"/>
<rect x="425" y="611" width="1338" height="3" fill="#363a3c"/>
<g transform="translate(437,596)"><path d="M-5-7H2L5-4V7H-5z" fill="#e8edf5" stroke="#cda94a"/><text class="ic" x="-3" y="5" style="fill:#2747a8">c</text></g>
<text class="w" x="448.500" y="603" textLength="56" lengthAdjust="spacingAndGlyphs">main.c</text><use href="#cl" x="517.500" y="595"/>
<use href="#mn" x="1721" y="588"/><use href="#mx" x="1744" y="591"/>
<rect x="472" y="614" width="9" height="167" fill="#fff"/>
<g clip-path="url(#c4)">
<text class="m ln" x="439" y="632">100</text><text class="m ln" x="439" y="655">101</text><text class="m ln" x="439" y="678">102</text><text class="m ln" x="439" y="701">103</text><text class="m ln" x="439" y="724">104</text><text class="m ln" x="439" y="747">105</text><text class="m ln" x="439" y="770">106</text><text class="m ln" x="439" y="793">107</text>
<text class="m pk" x="528" y="632">#endif</text>
<text class="m w" x="528" y="655">}</text>
<text class="m" x="528" y="678"><tspan class="pk">return</tspan><tspan class="w"> </tspan><tspan class="or">status</tspan><tspan class="w">;</tspan></text>
<text class="m w" x="484.500" y="701">}</text>
<text class="m cm" x="484.500" y="724">/* Machine Check Exception */</text>
<text class="m" x="484.500" y="747"><tspan class="pk">void</tspan><tspan class="w"> </tspan><tspan class="gr">IVOR1_Exception_Handler</tspan><tspan class="w">(</tspan><tspan class="pk">void</tspan><tspan class="w">)</tspan></text>
<text class="m w" x="484.500" y="770">{</text>
</g>
<circle cx="476.500" cy="740" r="4" fill="#b8c4d0"/><path d="M474 740H479" stroke="#3b6592"/>
<rect x="1745" y="615" width="3" height="163" fill="#343434"/><rect x="1745" y="615" width="3" height="90" fill="#3f3f3f"/>
<rect x="427" y="778" width="1317" height="3" fill="#343434"/><rect x="427" y="778" width="1245" height="3" fill="#3f3f3f"/>

<!-- Console -->
<rect x="425" y="785" width="1491" height="205" rx="6" fill="#2f2f2f"/>
<path d="M425 822V791A6 6 0 0 1 431 785H1910A6 6 0 0 1 1916 791V822z" fill="url(#tb)"/>
<path d="M613 822V796A6 6 0 0 1 619 790H724A6 6 0 0 1 730 796V822z" fill="#2f3336"/>
<rect x="425" y="822" width="1491" height="27" fill="#2f3336"/>
<g transform="translate(436,806)"><rect x="-7" y="-8" width="14" height="16" fill="#dfe3e8"/><rect x="-7" y="2" width="7" height="6" fill="#d8262c"/><circle cx="0" cy="-4" r="3" fill="#d8262c"/></g>
<text class="l" x="448.500" y="814" textLength="80.500" lengthAdjust="spacingAndGlyphs" style="fill:#e0e0e0">Problems</text>
<g transform="translate(548,806)"><path d="M-7 7V-4H7V7z" fill="#d8c9a4"/><rect x="-2" y="-8" width="5" height="4" fill="#bbb"/><path d="M-4-1H4M-4 2H4" stroke="#3b6592"/></g>
<text class="l" x="560" y="814" textLength="45" lengthAdjust="spacingAndGlyphs" style="fill:#e0e0e0">Tasks</text>
<g transform="translate(624.500,805)"><rect x="-6" y="-6" width="12" height="10" fill="#e8eef6" stroke="#2f6db0" stroke-width="1.500"/><path d="M-3-3H3M-3 0H1" stroke="#2f6db0"/><path d="M-5 7H5" stroke="#2f6db0" stroke-width="1.500"/></g>
<text class="w" x="635.500" y="814" textLength="67.500" lengthAdjust="spacingAndGlyphs">Console</text><use href="#cl" x="717" y="806"/>
<g transform="translate(742,806)"><rect x="-7" y="-7" width="14" height="14" fill="#dfe6ef"/><path d="M-5-3H5M-5 0H5M-5 3H5" stroke="#9fb0c4"/></g>
<text class="l" x="753.500" y="814" textLength="87.500" lengthAdjust="spacingAndGlyphs" style="fill:#e0e0e0">Properties</text>
<g transform="translate(861,805)"><rect x="-7" y="-7" width="12" height="12" fill="#2f5a9c"/><path d="M-4-4H1M-4-1H1" stroke="#fff"/><circle cx="4" cy="4" r="3.500" fill="#6fbf73"/></g>
<text class="l" x="871.500" y="814" textLength="160.500" lengthAdjust="spacingAndGlyphs" style="fill:#e0e0e0">Debugger Console</text>
<g transform="translate(1052,806)"><rect x="-7" y="-5" width="9" height="4" fill="#8fd08f"/><rect x="-7" y="0" width="9" height="4" fill="#cfcfcf"/><path d="M1-6H7V7H1z" fill="#2fa44f"/><path d="M3-1L6 2L3 5z" fill="#fff"/></g>
<text class="l" x="1062.500" y="814" textLength="73.500" lengthAdjust="spacingAndGlyphs" style="fill:#e0e0e0">Progress</text>
<rect x="1571" y="792" width="292" height="21" fill="#565b5e"/>
<path d="M1582 793V803M1577 799L1582 806L1587 799" fill="none" stroke="#ffd75e" stroke-width="2.500"/>
<path d="M1605 807V797M1600 801L1605 794L1610 801" fill="none" stroke="#ffd75e" stroke-width="2.500"/>
<rect x="1617.500" y="791.500" width="23" height="21" fill="#3f5a6e" stroke="#4a7595"/>
<g transform="translate(1629,802)" stroke="#f2ae3e" stroke-width="2" fill="none"><path d="M5-5H-5M-2-8L-5-5L-2-2M-5 4H6M3 1L6 4L3 7"/></g>
<rect x="1643" y="792" width="1.500" height="20" fill="#2f3234"/><rect x="1743" y="792" width="1.500" height="20" fill="#2f3234"/>
<g transform="translate(1659.500,802)"><rect x="-5" y="-8" width="12" height="16" fill="#c9d7e8"/><rect x="-7" y="2" width="8" height="7" fill="#a9a9c0"/></g>
<g transform="translate(1682,802)"><rect x="-5" y="-8" width="12" height="16" fill="#c9d7e8"/><rect x="-7" y="2" width="7" height="6" fill="#d6a93a"/></g>
<path d="M1700 797H1711M1700 801H1711M1700 805H1707" stroke="#a9aeb5"/>
<g transform="translate(1727.500,801)"><path d="M-6-8H3L5-5V7H-6z" fill="#dfe3e8"/><path d="M-4-3H3M-4 0H3M-4 3H3" stroke="#6f8db8"/><path d="M3 3L8 9M8 3L3 9" stroke="#888" stroke-width="1.500"/></g>
<g transform="translate(1759.500,802)"><rect x="-6" y="-5" width="12" height="12" fill="#e5e9ee"/><rect x="-6" y="-5" width="12" height="3" fill="#3c93d0"/><path d="M0 0L6-7" stroke="#2fae42" stroke-width="2.500"/></g>
<g transform="translate(1783,801)"><rect x="-6" y="-7" width="12" height="12" fill="#e8eef6" stroke="#2f6db0" stroke-width="1.500"/><path d="M-3-3H3M-3 0H1" stroke="#2f6db0"/></g>
<use href="#dd" x="1805" y="802"/>
<g transform="translate(1829,802)"><rect x="-6" y="-5" width="12" height="12" fill="#fbf3d8" stroke="#b9a470"/><rect x="-6" y="-5" width="12" height="3" fill="#4a9ad8"/><use href="#plus" x="5" y="-5"/></g>
<use href="#dd" x="1851.500" y="802"/>
<use href="#mn" x="1874" y="799"/><use href="#mx" x="1896.500" y="802"/>
<text x="427" y="844" textLength="491" lengthAdjust="spacingAndGlyphs" style="fill:#5fb7ad">CDT Build Console [mpu_memory_protection_mpc5777c]</text>
<rect x="427" y="849" width="1487" height="2" fill="#eee"/>
<text class="m" x="430" y="868" style="fill:#000">Finished building: mpu_memory_protection_mpc5777c.siz</text>
<text class="m" x="430" y="937" style="fill:#0000e6">14:49:46 Build Finished (took 4s.278ms)</text>
<rect x="1911" y="851" width="3" height="134" fill="#3a3a3a"/>

<!-- Outline -->
<rect x="1769" y="108" width="147" height="675" rx="6" fill="#2f2f2f"/>
<path d="M1769 143V114A6 6 0 0 1 1775 108H1910A6 6 0 0 1 1916 114V143z" fill="url(#tb)"/>
<path d="M1769 143V114A6 6 0 0 1 1775 108H1818.500A6 6 0 0 1 1824.500 114V143z" fill="#2f3336"/>
<g transform="translate(1780.500,124)"><rect x="-6" y="-7" width="5" height="5" fill="#3c93d0"/><rect x="-6" y="1" width="5" height="5" fill="#3c93d0"/><path d="M0-5H6M0 3H6" stroke="#ddd" stroke-width="1.500"/></g>
<text class="w" x="1793" y="132" textLength="14" lengthAdjust="spacingAndGlyphs">O</text><use href="#cl" x="1812" y="123"/>
<text class="l" x="1832" y="121" style="font-size:13px">»</text><text class="l b" x="1838" y="130" style="font-size:11px">1</text>
<use href="#mn" x="1874" y="117"/><use href="#mx" x="1896.500" y="120"/>
<rect x="1777" y="143" width="131.500" height="22" fill="#505558"/>
<g transform="translate(1788.500,155)"><rect x="-6" y="-6" width="12" height="12" fill="#d9e4f1" stroke="#7ea6d2"/><rect x="-3" y="-1" width="6" height="2" fill="#2b5d9d"/></g>
<g transform="translate(1811.500,155)"><path d="M-7-6V6" stroke="#6f8a9a"/><rect x="-2" y="-7" width="5" height="6" fill="#2f8a8a"/><rect x="1" y="1" width="6" height="6" fill="#a23ca8"/></g>
<g transform="translate(1834.500,154)"><circle r="5.500" fill="#6fb0e0"/><path d="M-7-7L7 7" stroke="#123b7a" stroke-width="1.600"/></g>
<g transform="translate(1856,155)"><circle r="4" fill="#a0a8b0"/><path d="M-7 7L7-7" stroke="#123b7a" stroke-width="1.500"/><rect x="3" y="-9" width="3" height="6" fill="#d8262c"/></g>
<circle cx="1879.500" cy="154" r="4.500" fill="#3fae5f"/>
<g transform="translate(1902.500,154)" stroke="#000" stroke-width="2.500"><path d="M-5-6V6M5-6V6M-6-3H6M-6 3H6M0-6V6"/></g>
<rect x="1777" y="168" width="23" height="22" fill="#505558"/><use href="#wd" x="1791" y="176"/>
<g clip-path="url(#c3)">
<use href="#in" x="1807.500" y="203"/><text class="l" x="1826" y="210" textLength="50" lengthAdjust="spacingAndGlyphs">Cpu.h</text>
<use href="#in" x="1807.500" y="230"/><text class="l" x="1826" y="237" textLength="88" lengthAdjust="spacingAndGlyphs">pin_mux.h</text>
<use href="#bd" x="1806.500" y="257"/><rect x="1815" y="250" width="6.500" height="9" fill="#fff"/><text x="1815.500" y="257.500" style="font-size:8px;font-weight:bold;fill:#d02030">V</text><text class="l" x="1826" y="264" textLength="93" lengthAdjust="spacingAndGlyphs">exit_code :</text>
<use href="#in" x="1807.500" y="284"/><text class="l" x="1826" y="291" textLength="64" lengthAdjust="spacingAndGlyphs">stdint.h</text>
<use href="#in" x="1807.500" y="311"/><text class="l" x="1826" y="318" textLength="80.500" lengthAdjust="spacingAndGlyphs">stdbool.h</text>
<use href="#ha" x="1807.500" y="338"/><text class="l" x="1826" y="345" textLength="29.500" lengthAdjust="spacingAndGlyphs">ON</text>
<use href="#ha" x="1807.500" y="365"/><text class="l" x="1826" y="372" textLength="34" lengthAdjust="spacingAndGlyphs">OFF</text>
<use href="#ha" x="1807.500" y="391"/><text class="l" x="1826" y="398" textLength="84" lengthAdjust="spacingAndGlyphs">LED_GPIO</text>
<use href="#ha" x="1807.500" y="418"/><text class="l" x="1826" y="425.500" textLength="44" lengthAdjust="spacingAndGlyphs">LED0</text>
<use href="#ha" x="1807.500" y="445"/><text class="l" x="1826" y="452.500" textLength="42" lengthAdjust="spacingAndGlyphs">LED1</text>
<use href="#ha" x="1807.500" y="472"/><text class="l" x="1826" y="479.500" textLength="79" lengthAdjust="spacingAndGlyphs">SW_GPIO</text>
<use href="#ha" x="1807.500" y="499"/><text class="l" x="1826" y="506.500" textLength="27.500" lengthAdjust="spacingAndGlyphs">SW</text>
<use href="#ha" x="1807.500" y="526"/><text class="l" x="1826" y="533.500" textLength="96" lengthAdjust="spacingAndGlyphs">ADDRESS_</text>
<use href="#ha" x="1807.500" y="553"/><text class="l" x="1826" y="560.500" textLength="96" lengthAdjust="spacingAndGlyphs">SPR_MSCR</text>
<use href="#bd" x="1806.500" y="580"/><text class="l" x="1826" y="587.500" textLength="96" lengthAdjust="spacingAndGlyphs">expectedEr</text>
<use href="#gd" x="1807.500" y="608"/><text class="l" x="1826" y="614.500" textLength="96" lengthAdjust="spacingAndGlyphs">ErrorComp</text>
<use href="#gd" x="1807.500" y="635"/><text class="l" x="1826" y="641.500" textLength="100" lengthAdjust="spacingAndGlyphs">IVOR1_Exc</text>
<rect x="1771.500" y="649.500" width="142" height="26" fill="#454545" stroke="#77766a"/>
<use href="#gd" x="1807.500" y="662"/><text class="w" x="1826" y="669" textLength="92" lengthAdjust="spacingAndGlyphs" style="fill:#eee">main(void)</text>
</g>
<rect x="1771" y="756" width="143" height="26" fill="#eee"/><rect x="1797" y="757" width="26" height="24" fill="#c9c9c9"/>
<use href="#cL" x="1784" y="769"/><use href="#cR" x="1900" y="769"/>

<!-- status grip -->
<g fill="#c9c9c9"><rect x="1527" y="999" width="2" height="3"/><rect x="1527" y="1005" width="2" height="3"/><rect x="1527" y="1011" width="2" height="3"/></g>
</svg>
</body></html>
